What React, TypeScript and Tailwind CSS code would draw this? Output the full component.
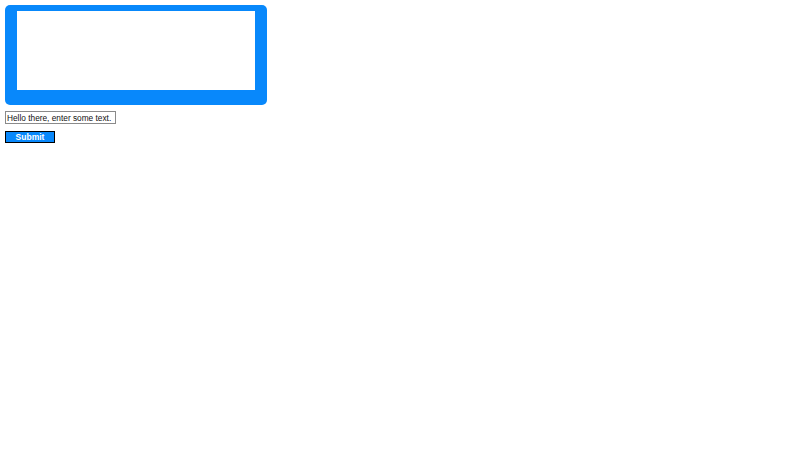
import React from "react";

const App = () => {
	return (
		<div className="p-[5px] bg-white min-h-[450px] font-['Liberation_Sans',Arial,sans-serif]">
			{/* Blue frame */}
			<div className="w-[262px] h-[100px] rounded-[5px] bg-[#0888fb] pt-[6px] px-[12px] pb-[15px]">
				<div className="w-full h-full bg-white"></div>
			</div>
			<div className="mt-[6px]">
				<input
					type="text"
					defaultValue="Hello there, enter some text."
					className="block w-[111px] h-[13px] px-[1px] border border-[#8a8a8a] bg-white text-[8.3px] leading-none text-[#111] outline-none"
				/>
			</div>
			<div className="mt-[7px]">
				<button
					type="submit"
					className="block w-[50px] h-[12px] border border-black bg-[#0888fb] text-white font-bold text-[8.5px] leading-none"
				>
					Submit
				</button>
			</div>
		</div>
	);
};

export default App;
